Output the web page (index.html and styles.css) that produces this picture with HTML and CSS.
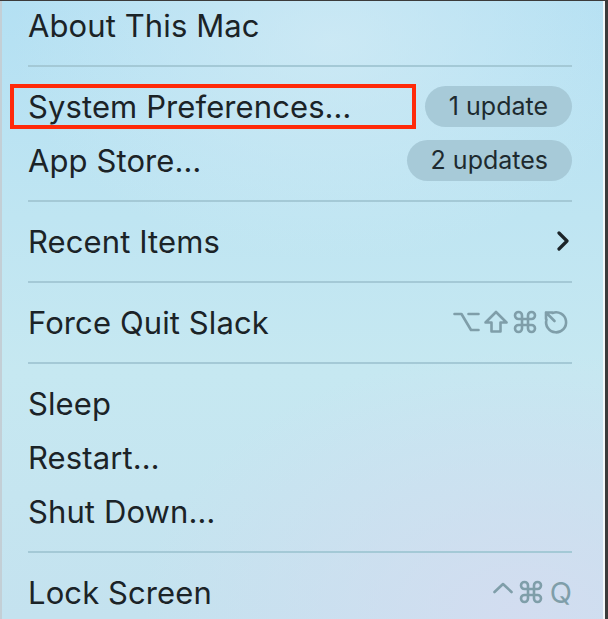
FILE: index.html
```html
<!DOCTYPE html>
<html lang="en">
<head>
<meta charset="utf-8">
<title>Apple menu</title>
<link rel="stylesheet" href="styles.css">
</head>
<body>
<div class="screen">
  <div class="menu">
    <div class="list">
      <div class="row"><span class="label">About This Mac</span></div>
      <div class="sep"></div>
      <div class="row"><span class="label marked">System Preferences…</span><span class="badge">1 update</span></div>
      <div class="row"><span class="label">App Store…</span><span class="badge">2 updates</span></div>
      <div class="sep"></div>
      <div class="row"><span class="label">Recent Items</span>
        <svg class="chev" width="14" height="20" viewBox="0 0 14 20"><polyline points="3,2 11,10 3,18" fill="none" stroke="#1c2428" stroke-width="3.2" stroke-linecap="round" stroke-linejoin="round"/></svg>
      </div>
      <div class="sep"></div>
      <div class="row"><span class="label">Force Quit Slack</span>
        <span class="keys" aria-label="Option Shift Command Escape">
          <svg class="key" width="27" height="24" viewBox="0 0 27 24"><path d="M1.5 4 H8.5 L18 20 H25.5 M15.5 4 H25.5" /></svg>
          <svg class="key" width="24" height="24" viewBox="0 0 24 24"><path d="M12 2 L22.5 12.5 H16.5 V21.5 H7.5 V12.5 H1.5 Z" /></svg>
          <svg class="key" width="26" height="24" viewBox="0 0 26 24"><path d="M10 9 V5.5 A3.5 3.5 0 1 0 6.5 9 H19.5 A3.5 3.5 0 1 0 16 5.5 V18.5 A3.5 3.5 0 1 0 19.5 15 H6.5 A3.5 3.5 0 1 0 10 18.5 Z" /></svg>
          <svg class="key" width="30" height="26" viewBox="0 0 30 26"><path d="M10.5 4 A10 10 0 1 1 4.5 10.5 M4 3.5 L12.5 12 M4 3.5 V10 M4 3.5 H10.5" /></svg>
        </span>
      </div>
      <div class="sep"></div>
      <div class="row"><span class="label">Sleep</span></div>
      <div class="row"><span class="label">Restart…</span></div>
      <div class="row"><span class="label">Shut Down…</span></div>
      <div class="sep"></div>
      <div class="row"><span class="label">Lock Screen</span>
        <span class="keys" aria-label="Control Command Q">
          <svg class="key" width="22" height="24" viewBox="0 0 22 24"><path d="M2.5 12 L11 4 L19.5 12" /></svg>
          <svg class="key" width="26" height="24" viewBox="0 0 26 24"><path d="M10 9 V5.5 A3.5 3.5 0 1 0 6.5 9 H19.5 A3.5 3.5 0 1 0 16 5.5 V18.5 A3.5 3.5 0 1 0 19.5 15 H6.5 A3.5 3.5 0 1 0 10 18.5 Z" /></svg>
          <span class="q">Q</span>
        </span>
      </div>
    </div>
  </div>
</div>
</body>
</html>
```
FILE: styles.css
```css
html, body {
  margin: 0;
  padding: 0;
  width: 608px;
  height: 619px;
  overflow: hidden;
  background: #3b3b3b;
}

.screen {
  display: flex;
  height: 619px;
  padding-top: 1px;
  padding-right: 3px;
  box-sizing: border-box;
}

.menu {
  flex: 1;
  border-left: 2px solid #c3cfd6;
  border-right: 2px solid #f3f7f9;
  overflow: hidden;
  background:
    radial-gradient(ellipse 320px 220px at 330px 40px, rgba(210, 235, 245, 0.75), rgba(210, 235, 245, 0) 100%),
    radial-gradient(ellipse 380px 260px at 520px 610px, rgba(212, 220, 240, 0.9), rgba(212, 220, 240, 0) 100%),
    linear-gradient(180deg, #b4e0f3 0%, #bfe5f2 35%, #c6e8f1 60%, #c4e2ef 100%);
  font-family: Inter, "Noto Sans", sans-serif;
  color: #1b2327;
}

.list {
  margin-top: -3px;
  padding: 0 31px 0 26px;
}

.row {
  height: 54px;
  display: flex;
  align-items: center;
  justify-content: space-between;
}

.label {
  font-size: 31px;
  letter-spacing: 0.1px;
  position: relative;
  line-height: 1;
}

.marked::before {
  content: "";
  position: absolute;
  left: -18px;
  right: -64px;
  top: -7px;
  bottom: -7px;
  border: 4px solid #ff2a0a;
}

.sep {
  height: 27px;
  display: flex;
  align-items: center;
}

.sep::after {
  content: "";
  flex: 1;
  height: 2px;
  background: #a4c9d6;
}

.badge {
  height: 41px;
  display: flex;
  align-items: center;
  padding: 0 24px;
  border-radius: 21px;
  background: #a7cad8;
  font-size: 25px;
  color: #1e2a2f;
}

.chev {
  display: block;
  margin-right: 2px;
}

.keys {
  display: flex;
  align-items: center;
  gap: 4px;
  color: #7f9ea9;
  line-height: 1;
}

.key {
  display: block;
}

.key path {
  fill: none;
  stroke: #7f9ea9;
  stroke-width: 2.6;
  stroke-linecap: round;
  stroke-linejoin: round;
}

.q {
  font-family: Inter, sans-serif;
  font-size: 29px;
  margin-left: 2px;
}
```
